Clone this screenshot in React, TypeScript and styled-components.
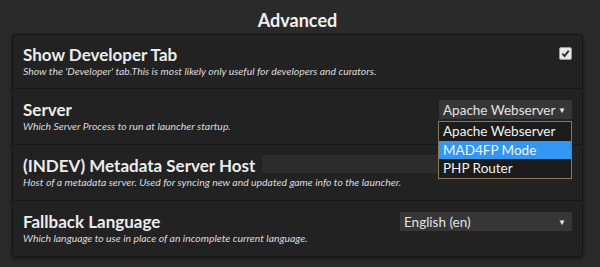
import styled, { createGlobalStyle } from "styled-components";

const GlobalStyle = createGlobalStyle`
  html, body {
    margin: 0;
    padding: 0;
    background: #2a2a2b;
    font-family: Lato, "Open Sans", sans-serif;
    color: #e6e6e6;
  }
`;

const Page = styled.div`
  width: 600px;
  height: 267px;
  overflow: hidden;
  padding: 0 17px 0 12px;
  box-sizing: border-box;
`;

const Heading = styled.h1`
  margin: 0;
  height: 34px;
  line-height: 40px;
  text-align: center;
  font-size: 18px;
  font-weight: 700;
  color: #f0f0f0;
`;

const Panel = styled.div`
  background: #222223;
  border: 1px solid #161617;
  border-radius: 3px;
  box-shadow: 0 2px 4px rgba(0, 0, 0, 0.45);
`;

const Row = styled.div<{ $first?: boolean }>`
  position: relative;
  display: flex;
  align-items: center;
  height: ${(p) => (p.$first ? "53px" : "56px")};
  padding: 0 10px;
  border-top: ${(p) => (p.$first ? "none" : "1px solid #171718")};
  box-sizing: border-box;
`;

const Text = styled.div`
  flex: 1;
  display: flex;
  flex-direction: column;
  margin-top: -2px;
`;

const TitleLine = styled.div`
  display: flex;
  align-items: center;
  gap: 7px;
`;

const Title = styled.div`
  font-size: 17px;
  font-weight: 700;
  color: #ececec;
  white-space: nowrap;
`;

const Desc = styled.div`
  font-size: 10.4px;
  font-style: italic;
  color: #dcdcdc;
  white-space: nowrap;
`;

const Check = styled.div`
  width: 11px;
  height: 11px;
  border-radius: 2px;
  background: #e8e8e8;
  border: 1px solid #9a9a9a;
  display: flex;
  align-items: center;
  justify-content: center;
  margin-top: -16px;
`;

const Select = styled.div<{ $width: number }>`
  flex: none;
  width: ${(p) => p.$width}px;
  height: 19px;
  background: #363637;
  color: #e2e2e2;
  font-size: 13.5px;
  display: flex;
  align-items: center;
  justify-content: space-between;
  padding: 0 6px 0 4px;
  box-sizing: border-box;
  margin-top: -14px;
`;

const Value = styled.span`
  white-space: nowrap;
`;

const Arrow = styled.span`
  font-size: 8px;
  color: #e8e8e8;
`;

const HostInput = styled.div`
  width: 290px;
  height: 18px;
  background: #2c2c2d;
  margin-top: -3px;
`;

const DropList = styled.div`
  position: absolute;
  right: 10px;
  top: 32px;
  width: 134px;
  background: #1c1c1d;
  border: 1px solid #8a7a52;
  box-sizing: border-box;
  z-index: 5;
`;

const Option = styled.div<{ $active?: boolean }>`
  height: 18.5px;
  line-height: 18.5px;
  padding-left: 4px;
  font-size: 13.5px;
  white-space: nowrap;
  color: #f2f2f2;
  background: ${(p) => (p.$active ? "#3396f3" : "transparent")};
`;

export default function App() {
  return (
    <>
      <GlobalStyle />
      <Page>
        <Heading>Advanced</Heading>
        <Panel>
          <Row $first>
            <Text>
              <Title>Show Developer Tab</Title>
              <Desc>
                Show the 'Developer' tab.This is most likely only useful for
                developers and curators.
              </Desc>
            </Text>
            <Check>
              <svg width="9" height="9" viewBox="0 0 10 10">
                <path
                  d="M1.5 5.2 L4 7.8 L8.6 1.8"
                  fill="none"
                  stroke="#2a2a2a"
                  strokeWidth="2"
                />
              </svg>
            </Check>
          </Row>
          <Row>
            <Text>
              <Title>Server</Title>
              <Desc>Which Server Process to run at launcher startup.</Desc>
            </Text>
            <Select $width={133}>
              <Value>Apache Webserver</Value>
              <Arrow>▼</Arrow>
            </Select>
            <DropList>
              <Option>Apache Webserver</Option>
              <Option $active>MAD4FP Mode</Option>
              <Option>PHP Router</Option>
            </DropList>
          </Row>
          <Row>
            <Text>
              <TitleLine>
                <Title>(INDEV) Metadata Server Host</Title>
                <HostInput />
              </TitleLine>
              <Desc>
                Host of a metadata server. Used for syncing new and updated game
                info to the launcher.
              </Desc>
            </Text>
          </Row>
          <Row>
            <Text>
              <Title>Fallback Language</Title>
              <Desc>
                Which language to use in place of an incomplete current
                language.
              </Desc>
            </Text>
            <Select $width={172}>
              <Value>English (en)</Value>
              <Arrow>▼</Arrow>
            </Select>
          </Row>
        </Panel>
      </Page>
    </>
  );
}
